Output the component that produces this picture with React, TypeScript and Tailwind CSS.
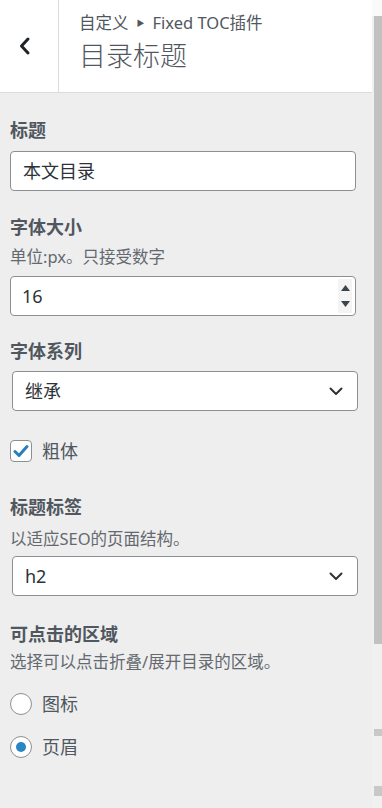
import React from "react"

const font = { fontFamily: '"Noto Sans", "Noto Sans CJK SC", sans-serif' }

function Label({ children, className = "" }: { children: React.ReactNode; className?: string }) {
  return <div className={`text-[18px] leading-[20px] font-bold text-[#50575e] ${className}`}>{children}</div>
}

function Desc({ children, className = "" }: { children: React.ReactNode; className?: string }) {
  return <div className={`text-[16.5px] leading-[20px] text-[#646970] ${className}`}>{children}</div>
}

function Chevron() {
  return (
    <svg width="14" height="9" viewBox="0 0 14 9" fill="none">
      <path d="M1.5 1.5 L7 7 L12.5 1.5" stroke="#2c3338" strokeWidth="2" strokeLinecap="round" strokeLinejoin="round" />
    </svg>
  )
}

function Select({ value, className = "" }: { value: string; className?: string }) {
  return (
    <div className={`h-[40px] ml-[2px] mr-[4px] flex items-center justify-between pl-[12px] pr-[14px] bg-white border border-[#8c8f94] rounded-[4px] ${className}`}>
      <span className="text-[18px] text-[#2c3338]">{value}</span>
      <Chevron />
    </div>
  )
}

export default function App() {
  return (
    <div className="w-[382px] h-[808px] flex bg-[#eeeeee] overflow-hidden" style={font}>
      <div className="flex-1 flex flex-col">
        <div className="h-[93px] flex bg-white border-b border-[#dcdcde]">
          <div className="w-[59px] flex items-center justify-center border-r border-[#dcdcde]">
            <svg width="14" height="20" viewBox="0 0 14 20" fill="none" className="ml-[-8px]">
              <path d="M10 3 L3.5 10 L10 17" stroke="#1d2327" strokeWidth="3" strokeLinecap="round" strokeLinejoin="round" />
            </svg>
          </div>
          <div className="flex flex-col pl-[20px] pt-[12px]">
            <div className="flex items-center text-[16.5px] leading-[22px] text-[#50575e]">
              <span>自定义</span>
              <span className="mx-[8px] text-[8px]">▶</span>
              <span>Fixed TOC插件</span>
            </div>
            <div className="mt-[5px] text-[27px] leading-[34px] text-[#50575e] font-light">目录标题</div>
          </div>
        </div>

        <div className="flex flex-col px-[10px]">
          <Label className="mt-[27px]">标题</Label>
          <div className="mt-[11px] mr-[6px] h-[40px] flex items-center pl-[12px] bg-white border border-[#8c8f94] rounded-[4px] text-[18px] text-[#2c3338]">
            本文目录
          </div>

          <Label className="mt-[26px]">字体大小</Label>
          <Desc className="mt-[10px]">单位:px。只接受数字</Desc>
          <div className="mt-[9px] mr-[6px] h-[40px] flex items-center justify-between pl-[11px] pr-[3px] bg-white border border-[#8c8f94] rounded-[4px] text-[18px] text-[#2c3338]">
            <span>16</span>
            <div className="w-[14px] h-[34px] flex flex-col items-center justify-between py-[6px] bg-[#f4f4f4]">
              <svg width="9" height="6" viewBox="0 0 9 6"><path d="M0 6 L4.5 0 L9 6 Z" fill="#3c434a" /></svg>
              <svg width="9" height="6" viewBox="0 0 9 6"><path d="M0 0 L9 0 L4.5 6 Z" fill="#3c434a" /></svg>
            </div>
          </div>

          <Label className="mt-[25px]">字体系列</Label>
          <Select value="继承" className="mt-[10px]" />

          <div className="mt-[29px] h-[22px] flex items-center">
            <div className="w-[22px] h-[22px] flex items-center justify-center bg-white border border-[#8c8f94] rounded-[4px]">
              <svg width="16" height="14" viewBox="0 0 16 14" fill="none">
                <path d="M2 7.5 L6 11.5 L14 2.5" stroke="#2a7fb8" strokeWidth="3" strokeLinecap="round" strokeLinejoin="round" />
              </svg>
            </div>
            <span className="ml-[10px] text-[18px] leading-[22px] text-[#50575e]">粗体</span>
          </div>

          <Label className="mt-[35px]">标题标签</Label>
          <Desc className="mt-[12px]">以适应SEO的页面结构。</Desc>
          <Select value="h2" className="mt-[7px]" />

          <Label className="mt-[28px]">可点击的区域</Label>
          <Desc className="mt-[8px]">选择可以点击折叠/展开目录的区域。</Desc>

          <div className="mt-[21px] h-[22px] flex items-center">
            <div className="w-[22px] h-[22px] rounded-full bg-white border border-[#8c8f94]" />
            <span className="ml-[10px] text-[18px] leading-[22px] text-[#50575e]">图标</span>
          </div>
          <div className="mt-[21px] h-[22px] flex items-center">
            <div className="w-[22px] h-[22px] flex items-center justify-center rounded-full bg-white border border-[#8c8f94]">
              <div className="w-[10px] h-[10px] rounded-full bg-[#2a85c5]" />
            </div>
            <span className="ml-[10px] text-[18px] leading-[22px] text-[#50575e]">页眉</span>
          </div>
        </div>
      </div>

      <div className="w-[10px] flex flex-col bg-[#f0f0f0]">
        <div className="h-[16px] bg-[#fafafa]" />
        <div className="ml-[2px] h-[628px] bg-[#c1c1c1]" />
        <div className="mt-[85px] ml-[2px] h-[7px] bg-[#c8c8c8]" />
        <div className="mt-[50px] ml-[2px] h-[10px] bg-[#c8c8c8]" />
      </div>
    </div>
  )
}
